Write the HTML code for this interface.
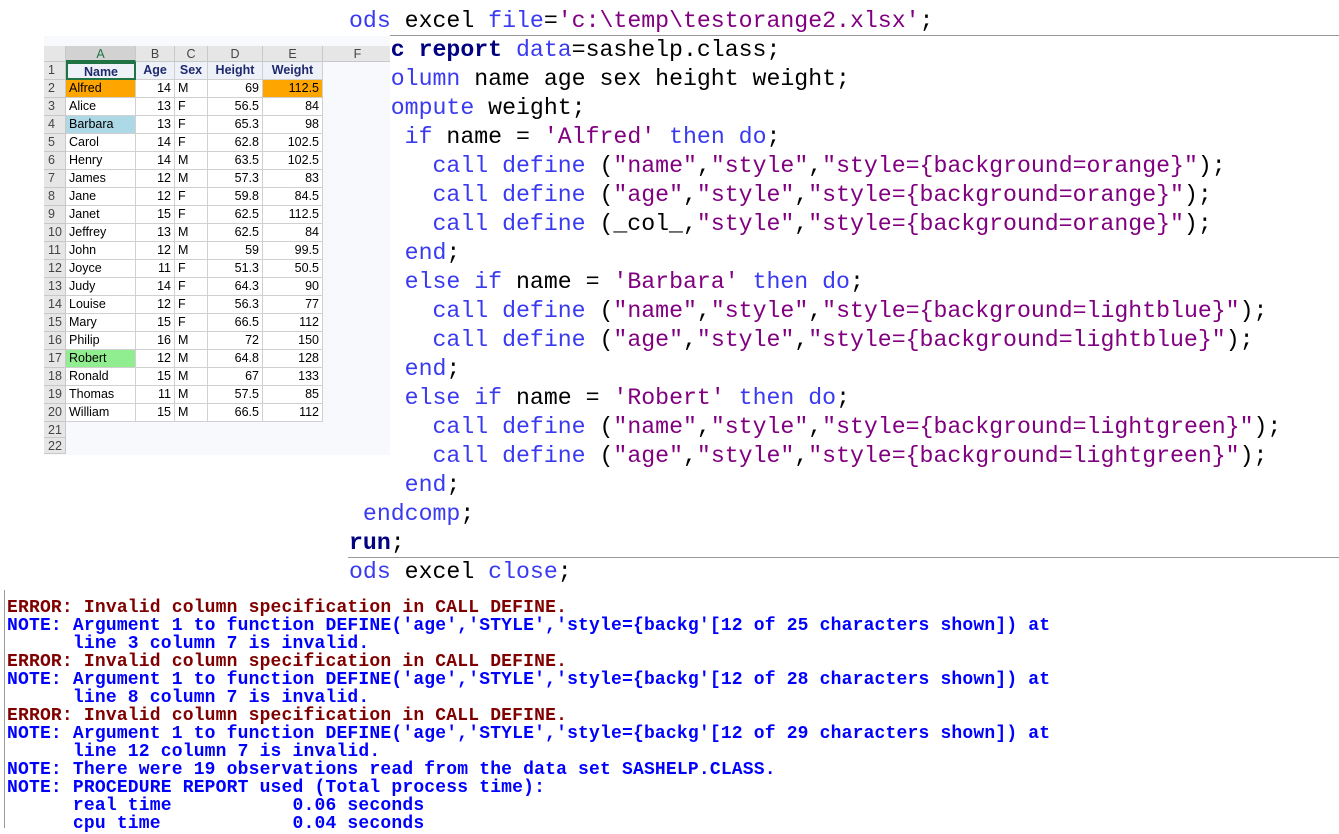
<!DOCTYPE html>
<html><head><meta charset="utf-8"><style>
body{margin:0;width:1339px;height:828px;background:#fff;position:relative;overflow:hidden;font-family:"Liberation Sans",sans-serif}
.c{position:absolute;left:349px;font-family:"Liberation Mono",monospace;font-size:23.2px;line-height:29px;white-space:pre;color:#000;margin:0}
.k{color:#3a3af0}.s{color:#800080}.b{color:#000080;font-weight:bold}
#xl{position:absolute;left:44px;top:36px;width:346px;height:419px;background:#f8f9fc;overflow:hidden}
.cell{position:absolute;box-sizing:border-box;font-size:12.5px;line-height:17px;padding:0 3px;white-space:nowrap;border-right:1px solid #d0d0d0;border-bottom:1px solid #d0d0d0;background:#fff}
.hd{background:#e6e6e6;color:#444;text-align:center;border-color:#c8c8c8}
.r{text-align:right}
.log{position:absolute;left:7px;font-family:"Liberation Mono",monospace;font-size:18px;line-height:18px;white-space:pre;font-weight:bold;letter-spacing:0.18px}
.e{color:#800000}.n{color:#0000ff}
</style></head><body>
<div style="position:absolute;left:390px;top:35px;width:949px;height:1px;background:#999"></div>
<div style="position:absolute;left:348px;top:557px;width:991px;height:1px;background:#999"></div>
<div style="position:absolute;left:4px;top:590px;width:1px;height:238px;background:#999"></div>
<pre class="c" style="top:7px"><span class="k">ods</span> excel <span class="k">file</span>=<span class="s">'c:\temp\testorange2.xlsx'</span>;
<span class="b">proc report</span> <span class="k">data</span>=sashelp.class;
  <span class="k">column</span> name age sex height weight;
  <span class="k">compute</span> weight;
    <span class="k">if</span> name = <span class="s">'Alfred'</span> <span class="k">then do</span>;
      <span class="k">call define</span> (<span class="s">"name"</span>,<span class="s">"style"</span>,<span class="s">"style={background=orange}"</span>);
      <span class="k">call define</span> (<span class="s">"age"</span>,<span class="s">"style"</span>,<span class="s">"style={background=orange}"</span>);
      <span class="k">call define</span> (_col_,<span class="s">"style"</span>,<span class="s">"style={background=orange}"</span>);
    <span class="k">end</span>;
    <span class="k">else if</span> name = <span class="s">'Barbara'</span> <span class="k">then do</span>;
      <span class="k">call define</span> (<span class="s">"name"</span>,<span class="s">"style"</span>,<span class="s">"style={background=lightblue}"</span>);
      <span class="k">call define</span> (<span class="s">"age"</span>,<span class="s">"style"</span>,<span class="s">"style={background=lightblue}"</span>);
    <span class="k">end</span>;
    <span class="k">else if</span> name = <span class="s">'Robert'</span> <span class="k">then do</span>;
      <span class="k">call define</span> (<span class="s">"name"</span>,<span class="s">"style"</span>,<span class="s">"style={background=lightgreen}"</span>);
      <span class="k">call define</span> (<span class="s">"age"</span>,<span class="s">"style"</span>,<span class="s">"style={background=lightgreen}"</span>);
    <span class="k">end</span>;
 <span class="k">endcomp</span>;
<span class="b">run</span>;
<span class="k">ods</span> excel <span class="k">close</span>;</pre>
<div id="xl"></div>
<div class="log" style="top:599px"><span class="e">ERROR: Invalid column specification in CALL DEFINE.</span>
<span class="n">NOTE: Argument 1 to function DEFINE('age','STYLE','style={backg'[12 of 25 characters shown]) at
      line 3 column 7 is invalid.</span>
<span class="e">ERROR: Invalid column specification in CALL DEFINE.</span>
<span class="n">NOTE: Argument 1 to function DEFINE('age','STYLE','style={backg'[12 of 28 characters shown]) at
      line 8 column 7 is invalid.</span>
<span class="e">ERROR: Invalid column specification in CALL DEFINE.</span>
<span class="n">NOTE: Argument 1 to function DEFINE('age','STYLE','style={backg'[12 of 29 characters shown]) at
      line 12 column 7 is invalid.
NOTE: There were 19 observations read from the data set SASHELP.CLASS.
NOTE: PROCEDURE REPORT used (Total process time):
      real time           0.06 seconds
      cpu time            0.04 seconds</span></div>
<script>
var xl=document.getElementById('xl');
var cols=[[0,22],[22,70],[92,39],[131,33],[164,55],[219,60],[279,70]];
var letters=['','A','B','C','D','E','F'];
function add(x,y,w,h,t,cls,st){var d=document.createElement('div');d.className='cell '+(cls||'');d.style.cssText='left:'+x+'px;top:'+y+'px;width:'+w+'px;height:'+h+'px;'+(st||'');d.textContent=t;xl.appendChild(d);return d;}
for(var i=0;i<7;i++)add(cols[i][0],10,cols[i][1],16,letters[i],'hd',i==1?'background:#d2d2d2;color:#217346;border-bottom:2px solid #217346':'');
var data=[["Alfred",14,"M",69,112.5],["Alice",13,"F",56.5,84],["Barbara",13,"F",65.3,98],["Carol",14,"F",62.8,102.5],["Henry",14,"M",63.5,102.5],["James",12,"M",57.3,83],["Jane",12,"F",59.8,84.5],["Janet",15,"F",62.5,112.5],["Jeffrey",13,"M",62.5,84],["John",12,"M",59,99.5],["Joyce",11,"F",51.3,50.5],["Judy",14,"F",64.3,90],["Louise",12,"F",56.3,77],["Mary",15,"F",66.5,112],["Philip",16,"M",72,150],["Robert",12,"M",64.8,128],["Ronald",15,"M",67,133],["Thomas",11,"M",57.5,85],["William",15,"M",66.5,112]];
var y=26;
add(0,y,22,18,'1','hd','text-align:left;padding-left:4px');
var hs=['Name','Age','Sex','Height','Weight'];
for(var j=0;j<5;j++)add(cols[j+1][0],y,cols[j+1][1],18,hs[j],'', 'text-align:center;font-weight:bold;color:#1f2a6e;background:#eef1f8;'+(j==0?'border:2px solid #217346;':''));
y+=18;
for(var r=0;r<19;r++){
 add(0,y,22,18,String(r+2),'hd','text-align:left;padding-left:4px');
 var d=data[r];var bg='';
 if(d[0]=='Alfred')bg='background:#ffa500;';else if(d[0]=='Barbara')bg='background:#add8e6;';else if(d[0]=='Robert')bg='background:#90ee90;';
 add(cols[1][0],y,cols[1][1],18,d[0],'',bg);
 add(cols[2][0],y,cols[2][1],18,d[1],'r');
 add(cols[3][0],y,cols[3][1],18,d[2],'');
 add(cols[4][0],y,cols[4][1],18,d[3],'r');
 add(cols[5][0],y,cols[5][1],18,d[4],'r',d[0]=='Alfred'?'background:#ffa500;':'');
 y+=18;}
add(0,y,22,16,'21','hd','text-align:left;padding-left:4px');y+=16;
add(0,y,22,16,'22','hd','text-align:left;padding-left:4px');
</script>
</body></html>
